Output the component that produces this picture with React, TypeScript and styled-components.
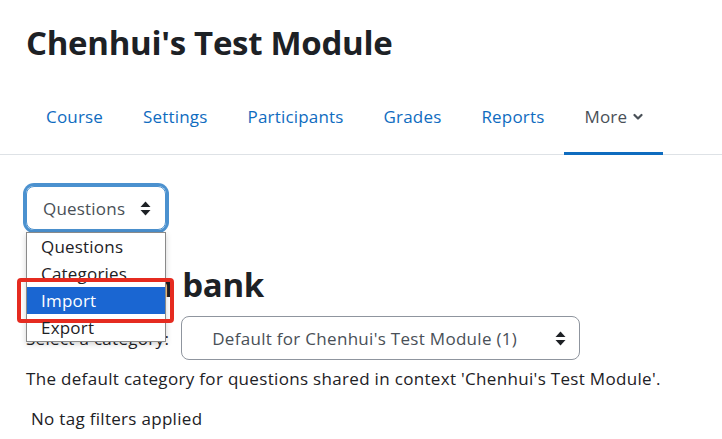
import React from "react";
import styled, { createGlobalStyle } from "styled-components";

const GlobalStyle = createGlobalStyle`
  body {
    margin: 0;
    background: #fff;
    font-family: "Open Sans", "Noto Sans", sans-serif;
    color: #1d2125;
  }
`;

const Page = styled.div`
  width: 722px;
  height: 439px;
  overflow: hidden;
  position: relative;
`;

const PageTitle = styled.h1`
  margin: 0;
  padding: 21px 0 0 26px;
  font-size: 33px;
  line-height: 44px;
  letter-spacing: -0.3px;
  font-weight: 700;
  color: #1d2125;
`;

const Nav = styled.nav`
  margin-top: 14px;
  height: 75px;
  display: flex;
  padding-left: 26px;
  border-bottom: 1px solid #dee2e6;
`;

const Tab = styled.div<{ $active?: boolean }>`
  position: relative;
  display: flex;
  align-items: center;
  gap: 6px;
  padding: 0 20px;
  font-size: 17px;
  letter-spacing: 0.18px;
  color: ${(p) => (p.$active ? "#495057" : "#0f6cbf")};

  &::after {
    content: "";
    display: ${(p) => (p.$active ? "block" : "none")};
    position: absolute;
    left: 0;
    right: 0;
    bottom: -1px;
    height: 3px;
    background: #0f6cbf;
  }
`;

const Content = styled.div`
  padding: 31px 0 0 26px;
`;

const SelectWrap = styled.div`
  position: relative;
  width: 140px;
`;

const QuestionSelect = styled.div`
  box-sizing: border-box;
  height: 44px;
  width: 140px;
  display: flex;
  align-items: center;
  justify-content: space-between;
  padding: 0 14px 0 16px;
  border: 1px solid #4b91cf;
  border-radius: 8px;
  box-shadow: 0 0 0 3px #4b91cf;
  font-size: 17px;
  letter-spacing: 0.2px;
  color: #495057;
`;

const Listbox = styled.ul`
  position: absolute;
  top: 46px;
  left: 0;
  width: 138px;
  margin: 0;
  padding: 0;
  list-style: none;
  background: #fff;
  border: 1px solid #8a8a8a;
  box-shadow: 0 2px 6px rgba(0, 0, 0, 0.18);
  z-index: 2;
`;

const Option = styled.li<{ $selected?: boolean }>`
  position: relative;
  height: 27px;
  line-height: 27px;
  padding-left: 14px;
  font-size: 17px;
  letter-spacing: 0.2px;
  background: ${(p) => (p.$selected ? "#1a66d2" : "transparent")};
  color: ${(p) => (p.$selected ? "#fff" : "#1d2125")};
`;

const Highlight = styled.div`
  position: absolute;
  top: -9px;
  bottom: -9px;
  left: -10px;
  right: -9px;
  border: 4px solid #e52b20;
  border-radius: 4px;
  pointer-events: none;
`;

const Heading = styled.h2`
  margin: 33px 0 0;
  font-size: 33px;
  line-height: 44px;
  letter-spacing: -0.3px;
  font-weight: 700;
  color: #1d2125;
`;

const CategoryRow = styled.div`
  margin-top: 9px;
  display: flex;
  align-items: center;
  gap: 12px;
`;

const Label = styled.label`
  font-size: 17px;
  letter-spacing: 0.3px;
  color: #1d2125;
`;

const CategorySelect = styled.div`
  box-sizing: border-box;
  width: 399px;
  height: 44px;
  display: flex;
  align-items: center;
  justify-content: space-between;
  padding: 0 13px 0 30px;
  border: 1px solid #8f959e;
  border-radius: 8px;
  font-size: 17px;
  letter-spacing: 0.3px;
  color: #495057;
`;

const Description = styled.p`
  margin: 7px 0 0;
  font-size: 17px;
  line-height: 24px;
  letter-spacing: 0.32px;
  color: #1d2125;
`;

const TagNote = styled.p`
  margin: 16px 0 0 5px;
  font-size: 17px;
  line-height: 24px;
  letter-spacing: 0.3px;
  color: #1d2125;
`;

const SortArrows = () => (
  <svg width="11" height="15" viewBox="0 0 11 15">
    <path d="M5.5 0.5 L10.5 6 H0.5 Z" fill="#1d2125" />
    <path d="M5.5 14.5 L10.5 9 H0.5 Z" fill="#1d2125" />
  </svg>
);

const Chevron = () => (
  <svg width="10" height="8" viewBox="0 0 10 8">
    <path
      d="M1.5 2 L5 5.5 L8.5 2"
      fill="none"
      stroke="#495057"
      strokeWidth="2.2"
      strokeLinecap="round"
      strokeLinejoin="round"
    />
  </svg>
);

const tabs = ["Course", "Settings", "Participants", "Grades", "Reports"];
const options = ["Questions", "Categories", "Import", "Export"];

const App: React.FC = () => {
  return (
    <Page>
      <GlobalStyle />
      <PageTitle>Chenhui's Test Module</PageTitle>
      <Nav>
        {tabs.map((t) => (
          <Tab key={t}>{t}</Tab>
        ))}
        <Tab $active>
          More
          <Chevron />
        </Tab>
      </Nav>
      <Content>
        <SelectWrap>
          <QuestionSelect>
            Questions
            <SortArrows />
          </QuestionSelect>
          <Listbox>
            {options.map((o) => (
              <Option key={o} $selected={o === "Import"}>
                {o}
                {o === "Import" && <Highlight />}
              </Option>
            ))}
          </Listbox>
        </SelectWrap>
        <Heading>Question bank</Heading>
        <CategoryRow>
          <Label>Select a category:</Label>
          <CategorySelect>
            Default for Chenhui's Test Module (1)
            <SortArrows />
          </CategorySelect>
        </CategoryRow>
        <Description>
          The default category for questions shared in context 'Chenhui's Test
          Module'.
        </Description>
        <TagNote>No tag filters applied</TagNote>
      </Content>
    </Page>
  );
};

export default App;
